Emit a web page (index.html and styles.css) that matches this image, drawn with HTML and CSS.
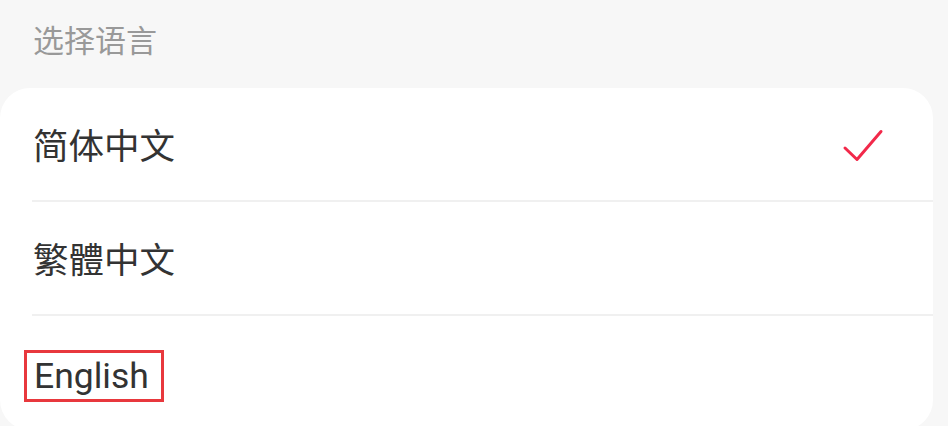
FILE: index.html
```html
<!DOCTYPE html>
<html lang="zh">
<head>
<meta charset="utf-8">
<title>选择语言</title>
<link rel="stylesheet" href="styles.css">
</head>
<body>
<div class="page">
  <div class="section-title">选择语言</div>
  <div class="card">
    <div class="row">
      <span class="label">简体中文</span>
      <svg class="check" width="42" height="40" viewBox="0 0 42 40" aria-hidden="true">
        <path d="M3 22 L15 33.5 L39 5.5" fill="none" stroke="#f2294a" stroke-width="3" stroke-linecap="round" stroke-linejoin="round"/>
      </svg>
    </div>
    <div class="row">
      <span class="label">繁體中文</span>
    </div>
    <div class="row last">
      <span class="label label-en highlighted">English</span>
    </div>
  </div>
</div>
</body>
</html>
```

FILE: styles.css
```css
html, body {
  margin: 0;
  padding: 0;
  background: #f7f7f7;
  overflow: hidden;
}

.page {
  width: 948px;
  height: 426px;
  font-family: Roboto, "Noto Sans CJK SC", sans-serif;
}

.section-title {
  height: 88px;
  box-sizing: border-box;
  padding: 22px 0 0 33px;
  font-size: 31px;
  line-height: 40px;
  color: #999999;
}

.card {
  margin-right: 15px;
  background: #ffffff;
  border-radius: 30px;
  padding-left: 32px;
}

.row {
  height: 114px;
  display: flex;
  align-items: center;
  justify-content: space-between;
  border-bottom: 2px solid #f0f0f0;
  box-sizing: border-box;
  padding-right: 49px;
}

.row.last {
  border-bottom: none;
}

.label {
  font-size: 35.5px;
  line-height: 42px;
  color: #333333;
  padding-left: 1px;
  margin-top: 6px;
}

.label-en {
  font-size: 35.5px;
}

.highlighted {
  display: inline-block;
  border: 3px solid #e8383d;
  padding: 2px 12px 2px 7px;
  margin-left: -8px;
  margin-top: 6px;
}

.check {
  display: block;
  margin-top: 3px;
}
```
